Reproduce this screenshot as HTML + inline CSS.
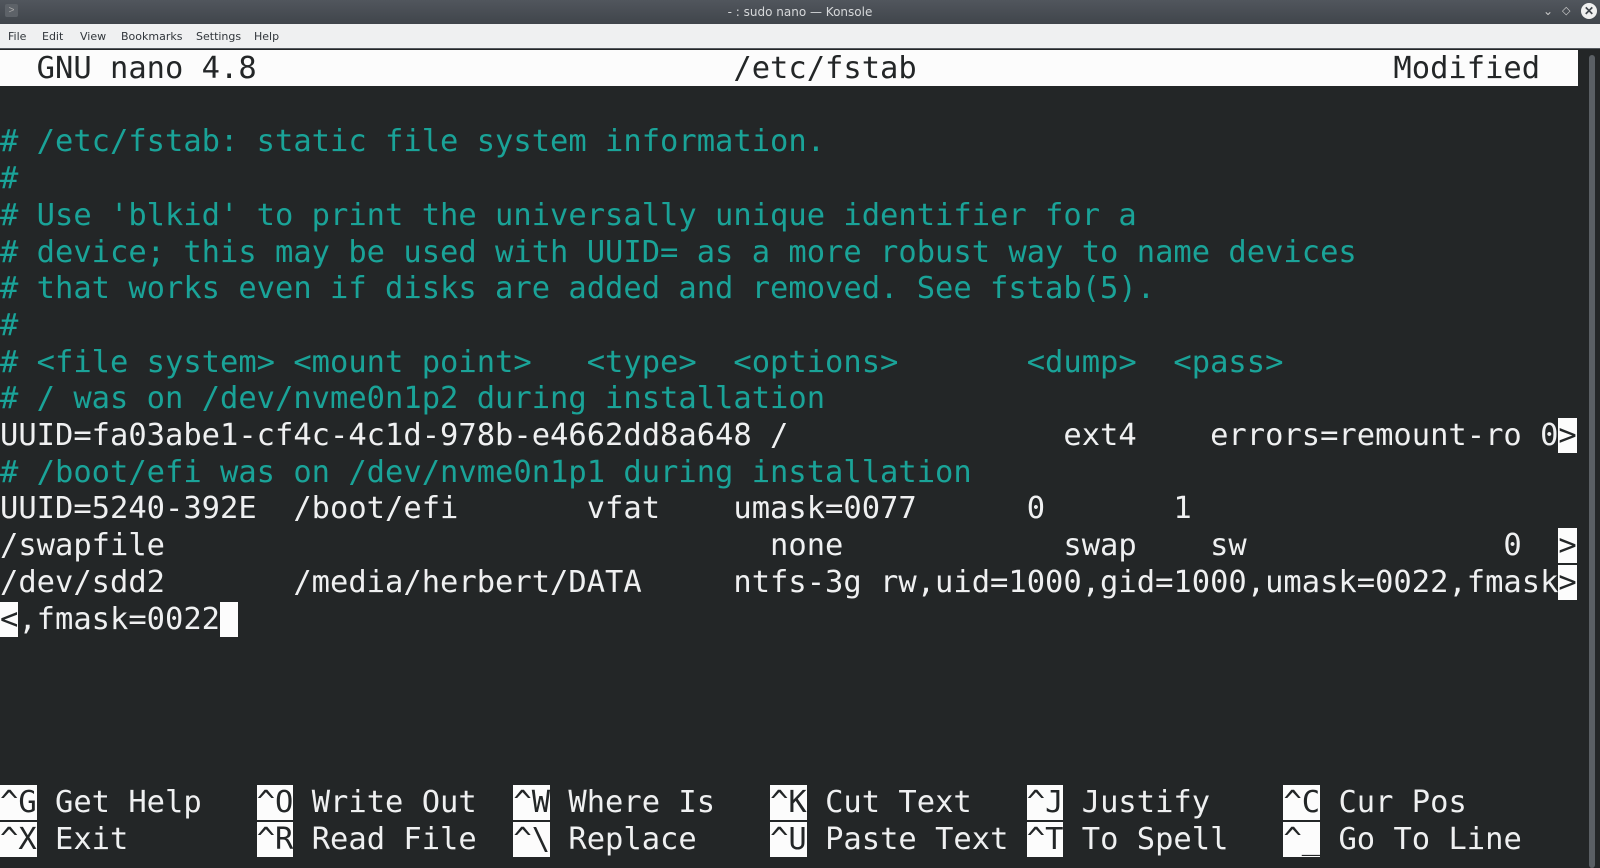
<!DOCTYPE html>
<html><head><meta charset="utf-8"><style>
html,body{margin:0;padding:0;width:1600px;height:868px;overflow:hidden;background:#232627;}
#tb{position:absolute;left:0;top:0;width:1600px;height:24px;background:linear-gradient(#51565d,#40454b);}
#tb .t{position:absolute;left:0;width:1600px;top:5px;text-align:center;color:#d6d8da;font:12px "DejaVu Sans","Liberation Sans",sans-serif;}
#mb{position:absolute;left:0;top:24px;width:1600px;height:25px;background:#eff0f1;border-bottom:1px solid #555a60;box-sizing:border-box;}
#mb span{position:absolute;top:6px;color:#31363b;font:11px "DejaVu Sans","Liberation Sans",sans-serif;}
.r{position:absolute;left:0;height:36.7px;line-height:36.7px;margin-top:1.5px;white-space:pre;font-family:"DejaVu Sans Mono","Liberation Mono",monospace;font-size:30.46px;color:#eff0f1;}
.c{color:#1aa398;}
.i{background:#fcfcfc;color:#232627;}
#title{position:absolute;left:0;top:49.5px;width:1578px;height:36.7px;background:#fcfcfc;}
#sb{position:absolute;left:1589px;top:55px;width:6px;height:813px;background:#5a5f64;border-radius:3px;}
</style></head><body>
<div id="tb"><div style="position:absolute;left:5px;top:4px;width:13px;height:13px;background:#5d6268;border-radius:2px;color:#aaa;font:10px sans-serif;line-height:13px;text-align:center">&gt;</div><div class="t">- : sudo nano — Konsole</div>
<div style="position:absolute;left:1543px;top:4px;color:#ccc;font:12px sans-serif">⌄</div>
<div style="position:absolute;left:1562px;top:4px;color:#ccc;font:11px sans-serif">◇</div>
<div style="position:absolute;left:1581px;top:3px;width:16px;height:16px;border-radius:8px;background:#f0f0f0;color:#40454b;font:bold 12px sans-serif;line-height:16px;text-align:center">✕</div></div>
<div id="mb"><span style="left:8px">File</span><span style="left:42px">Edit</span><span style="left:80px">View</span><span style="left:121px">Bookmarks</span><span style="left:196px">Settings</span><span style="left:254px">Help</span></div>
<div id="title"></div>
<div id="sb"></div>
<div class="r" style="top:49.5px;color:#232627">  GNU nano 4.8                          /etc/fstab                          Modified</div>
<div class="r c" style="top:122.9px"># /etc/fstab: static file system information.</div>
<div class="r c" style="top:159.6px">#</div>
<div class="r c" style="top:196.3px"># Use 'blkid' to print the universally unique identifier for a</div>
<div class="r c" style="top:233px"># device; this may be used with UUID= as a more robust way to name devices</div>
<div class="r c" style="top:269.7px"># that works even if disks are added and removed. See fstab(5).</div>
<div class="r c" style="top:306.4px">#</div>
<div class="r c" style="top:343.1px"># &lt;file system&gt; &lt;mount point&gt;   &lt;type&gt;  &lt;options&gt;       &lt;dump&gt;  &lt;pass&gt;</div>
<div class="r c" style="top:379.8px"># / was on /dev/nvme0n1p2 during installation</div>
<div class="r" style="top:416.5px">UUID=fa03abe1-cf4c-4c1d-978b-e4662dd8a648 /               ext4    errors=remount-ro 0<span class="i">&gt;</span></div>
<div class="r c" style="top:453.2px"># /boot/efi was on /dev/nvme0n1p1 during installation</div>
<div class="r" style="top:489.9px">UUID=5240-392E  /boot/efi       vfat    umask=0077      0       1</div>
<div class="r" style="top:526.6px">/swapfile                                 none            swap    sw              0  <span class="i">&gt;</span></div>
<div class="r" style="top:563.3px">/dev/sdd2       /media/herbert/DATA     ntfs-3g rw,uid=1000,gid=1000,umask=0022,fmask<span class="i">&gt;</span></div>
<div class="r" style="top:600px"><span class="i">&lt;</span>,fmask=0022<span class="i"> </span></div>
<div class="r" style="top:783.5px"><span class="i">^G</span> Get Help   <span class="i">^O</span> Write Out  <span class="i">^W</span> Where Is   <span class="i">^K</span> Cut Text   <span class="i">^J</span> Justify    <span class="i">^C</span> Cur Pos</div>
<div class="r" style="top:820.2px"><span class="i">^X</span> Exit       <span class="i">^R</span> Read File  <span class="i">^\</span> Replace    <span class="i">^U</span> Paste Text <span class="i">^T</span> To Spell   <span class="i">^_</span> Go To Line</div>
</body></html>
